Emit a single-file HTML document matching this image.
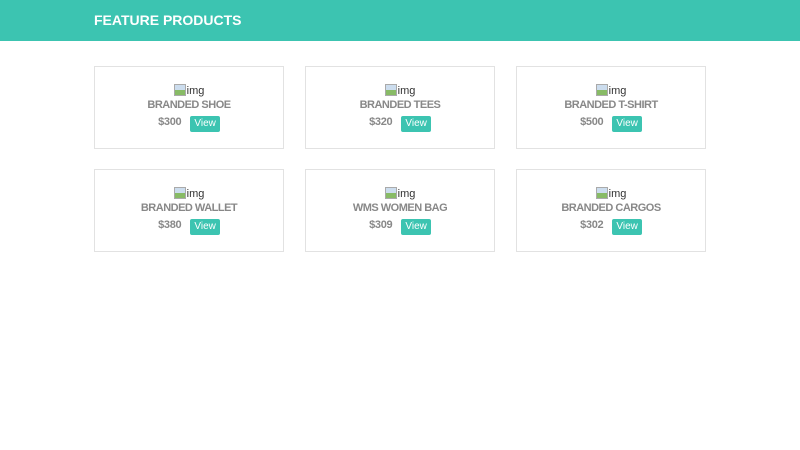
<!DOCTYPE html>
<html><head><meta charset="utf-8"><style>
*{margin:0;padding:0;box-sizing:border-box}
body{width:800px;height:450px;background:#fff;font-family:"Liberation Sans",sans-serif;overflow:hidden}
.hdr{height:41px;background:#3cc4b1;color:#fff;font-weight:bold;font-size:14px;padding-left:94px;line-height:40px}
.card{position:absolute;width:190px;height:83px;border:1px solid #e2e2e2;text-align:center}
.im{position:absolute;top:17px;left:0;right:0;font-size:11px;color:#333}
.im i{display:inline-block;width:12px;height:12px;border:1px solid #aaa;background:linear-gradient(#cde 50%,#8b6 50%);vertical-align:-2px;margin-right:1px}
.nm{position:absolute;top:32px;left:0;right:0;font-size:11px;font-weight:bold;color:#888;letter-spacing:-0.5px}
.pr{position:absolute;top:49px;left:0;right:0;font-size:11px;font-weight:bold;color:#888;letter-spacing:-0.3px}
.btn{display:inline-block;background:#3cc4b1;color:#fff;font-weight:normal;letter-spacing:0;font-size:10px;padding:0 4px;height:16px;line-height:16px;border-radius:2px;margin-left:9px;vertical-align:-1px}
</style></head><body>
<div class="hdr">FEATURE PRODUCTS</div>
<div class="card" style="left:94px;top:66px"><div class="im"><i></i>img</div><div class="nm">BRANDED SHOE</div><div class="pr">$300<span class="btn">View</span></div></div>
<div class="card" style="left:305px;top:66px"><div class="im"><i></i>img</div><div class="nm">BRANDED TEES</div><div class="pr">$320<span class="btn">View</span></div></div>
<div class="card" style="left:516px;top:66px"><div class="im"><i></i>img</div><div class="nm">BRANDED T-SHIRT</div><div class="pr">$500<span class="btn">View</span></div></div>
<div class="card" style="left:94px;top:169px"><div class="im"><i></i>img</div><div class="nm">BRANDED WALLET</div><div class="pr">$380<span class="btn">View</span></div></div>
<div class="card" style="left:305px;top:169px"><div class="im"><i></i>img</div><div class="nm">WMS WOMEN BAG</div><div class="pr">$309<span class="btn">View</span></div></div>
<div class="card" style="left:516px;top:169px"><div class="im"><i></i>img</div><div class="nm">BRANDED CARGOS</div><div class="pr">$302<span class="btn">View</span></div></div>
</body></html>
